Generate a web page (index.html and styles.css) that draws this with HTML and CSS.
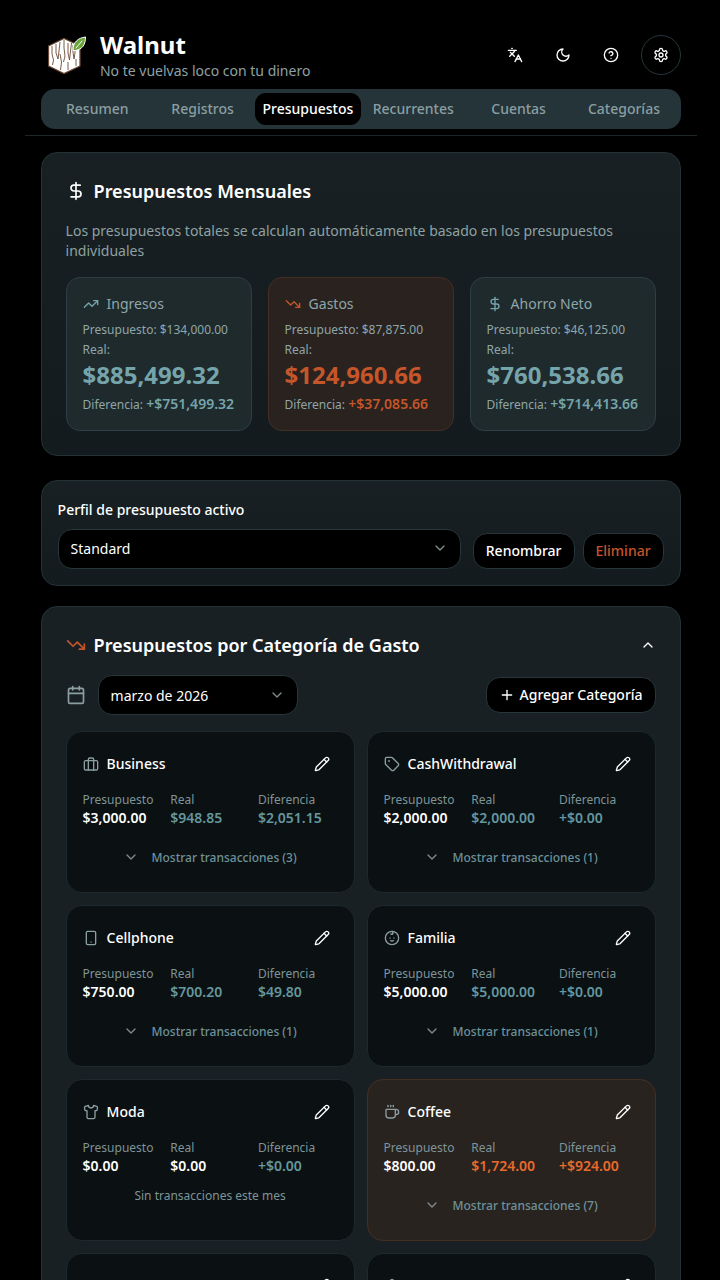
FILE: index.html
```html
<!DOCTYPE html>
<html lang="es">
<head>
    <meta charset="UTF-8">
    <meta name="viewport" content="width=device-width, initial-scale=1.0">
    <title>Walnut</title>
    <link rel="stylesheet" href="styles.css">
</head>
<body>
    <svg class="icon-defs" width="0" height="0" aria-hidden="true">
        <symbol id="i-down" viewBox="0 0 24 24"><path d="m6 9 6 6 6-6"/></symbol>
        <symbol id="i-pencil" viewBox="0 0 24 24"><path d="M21.2 6.8a2.8 2.8 0 0 0-4-4L3.8 16.2a2 2 0 0 0-.5.8l-1.3 4.4a.5.5 0 0 0 .6.6l4.4-1.3a2 2 0 0 0 .8-.5z"/><path d="m15 5 4 4"/></symbol>
        <symbol id="i-dollar" viewBox="0 0 24 24"><path d="M12 2v20"/><path d="M17 5H9.5a3.5 3.5 0 0 0 0 7h5a3.5 3.5 0 0 1 0 7H6"/></symbol>
        <symbol id="i-up-trend" viewBox="0 0 24 24"><path d="M22 7 13.5 15.5l-5-5L2 17"/><path d="M16 7h6v6"/></symbol>
        <symbol id="i-down-trend" viewBox="0 0 24 24"><path d="M22 17 13.5 8.5l-5 5L2 7"/><path d="M16 17h6v-6"/></symbol>
    </svg>

    <div class="page">
        <header class="top">
            <div class="top-row">
                <div class="brand">
                    <svg class="logo" viewBox="0 0 38 38">
                        <path d="M16 2.500 32 10V30L16 37.500 .5 30V10z" fill="#fff" stroke="#6b4a36" stroke-width="1.300"/>
                        <path d="M4 10v8l1.500 6-1 5M8 8v9l2 6 1-8 1-9M12 18l1.500 8-1 8M16 4v8l1 8-1.500 6M20 7v10l1.500 7 1-9 1-8M20 34v-8M25 9v7l1 7 1-6v-7M28 30v-7" fill="none" stroke="#6b4a36" stroke-width=".9" stroke-linecap="butt"/>
                        <path d="M25 14C25 6 30 2 37.500 1c0 8-3 12-10 13.500z" fill="#6aa53a" stroke="#fff" stroke-width="1"/>
                        <path d="M28 12 34 5" stroke="#fff" stroke-width="1"/>
                    </svg>
                    <div class="brand-text">
                        <h1>Walnut</h1>
                        <p>No te vuelvas loco con tu dinero</p>
                    </div>
                </div>
                <div class="top-actions">
                    <button class="round-btn">
                        <svg class="ic-16" viewBox="0 0 24 24"><path d="m5 8 6 6"/><path d="m4 14 6-6 2-3"/><path d="M2 5h12"/><path d="M7 2h1"/><path d="m22 22-5-10-5 10"/><path d="M14 18h6"/></svg>
                    </button>
                    <button class="round-btn">
                        <svg class="ic-16" viewBox="0 0 24 24"><path d="M12 3a6 6 0 0 0 9 9 9 9 0 1 1-9-9Z"/></svg>
                    </button>
                    <button class="round-btn">
                        <svg class="ic-16" viewBox="0 0 24 24"><circle cx="12" cy="12" r="10"/><path d="M9.100 9a3 3 0 0 1 5.800 1c0 2-3 3-3 3"/><path d="M12 17h.01"/></svg>
                    </button>
                    <button class="round-btn bordered">
                        <svg class="ic-16" viewBox="0 0 24 24"><path d="M12.220 2h-.44a2 2 0 0 0-2 2v.18a2 2 0 0 1-1 1.730l-.43.25a2 2 0 0 1-2 0l-.15-.08a2 2 0 0 0-2.730.73l-.22.38a2 2 0 0 0 .73 2.730l.15.1a2 2 0 0 1 1 1.720v.51a2 2 0 0 1-1 1.740l-.15.09a2 2 0 0 0-.73 2.730l.22.38a2 2 0 0 0 2.730.73l.15-.08a2 2 0 0 1 2 0l.43.25a2 2 0 0 1 1 1.730V20a2 2 0 0 0 2 2h.44a2 2 0 0 0 2-2v-.18a2 2 0 0 1 1-1.730l.43-.25a2 2 0 0 1 2 0l.15.08a2 2 0 0 0 2.730-.73l.22-.39a2 2 0 0 0-.73-2.730l-.15-.08a2 2 0 0 1-1-1.740v-.5a2 2 0 0 1 1-1.740l.15-.09a2 2 0 0 0 .73-2.730l-.22-.38a2 2 0 0 0-2.730-.73l-.15.08a2 2 0 0 1-2 0l-.43-.25a2 2 0 0 1-1-1.730V4a2 2 0 0 0-2-2z"/><circle cx="12" cy="12" r="3"/></svg>
                    </button>
                </div>
            </div>
            <nav class="tabs">
                <a href="#">Resumen</a>
                <a href="#">Registros</a>
                <a href="#" class="active">Presupuestos</a>
                <a href="#">Recurrentes</a>
                <a href="#">Cuentas</a>
                <a href="#">Categorías</a>
            </nav>
        </header>

        <main>
            <section class="panel monthly">
                <h2 class="panel-title"><svg class="ic-20 white"><use href="#i-dollar"/></svg>Presupuestos Mensuales</h2>
                <p class="panel-note">Los presupuestos totales se calculan automáticamente basado en los presupuestos individuales</p>
                <div class="summary">
                    <div class="stat">
                        <div class="stat-head"><svg class="ic-16 teal"><use href="#i-up-trend"/></svg>Ingresos</div>
                        <p>Presupuesto: $134,000.00</p>
                        <p>Real:</p>
                        <div class="stat-value">$885,499.32</div>
                        <p class="stat-diff">Diferencia: <b>+$751,499.32</b></p>
                    </div>
                    <div class="stat over">
                        <div class="stat-head"><svg class="ic-16 rust"><use href="#i-down-trend"/></svg>Gastos</div>
                        <p>Presupuesto: $87,875.00</p>
                        <p>Real:</p>
                        <div class="stat-value">$124,960.66</div>
                        <p class="stat-diff">Diferencia: <b>+$37,085.66</b></p>
                    </div>
                    <div class="stat">
                        <div class="stat-head"><svg class="ic-16 teal"><use href="#i-dollar"/></svg>Ahorro Neto</div>
                        <p>Presupuesto: $46,125.00</p>
                        <p>Real:</p>
                        <div class="stat-value">$760,538.66</div>
                        <p class="stat-diff">Diferencia: <b>+$714,413.66</b></p>
                    </div>
                </div>
            </section>

            <section class="panel profile">
                <label class="profile-label">Perfil de presupuesto activo</label>
                <div class="profile-row">
                    <div class="select grow">Standard<svg class="ic-16 gray"><use href="#i-down"/></svg></div>
                    <button class="pill">Renombrar</button>
                    <button class="pill danger">Eliminar</button>
                </div>
            </section>

            <section class="panel categories">
                <div class="cat-title">
                    <h2 class="panel-title"><svg class="ic-20 rust"><use href="#i-down-trend"/></svg>Presupuestos por Categoría de Gasto</h2>
                    <svg class="ic-16 white" viewBox="0 0 24 24"><path d="m18 15-6-6-6 6"/></svg>
                </div>
                <div class="cat-tools">
                    <svg class="ic-20 slate" viewBox="0 0 24 24"><path d="M8 2v4"/><path d="M16 2v4"/><rect x="3" y="4" width="18" height="18" rx="2"/><path d="M3 10h18"/></svg>
                    <div class="select month">marzo de 2026<svg class="ic-16 gray"><use href="#i-down"/></svg></div>
                    <button class="pill add"><svg class="ic-16 white" viewBox="0 0 24 24"><path d="M5 12h14"/><path d="M12 5v14"/></svg>Agregar Categoría</button>
                </div>

                <div class="cat-grid">
                    <article class="cat-card">
                        <div class="cat-head">
                            <svg class="ic-16 slate" viewBox="0 0 24 24"><rect x="2" y="7" width="20" height="14" rx="2"/><path d="M16 21V5a2 2 0 0 0-2-2h-4a2 2 0 0 0-2 2v16"/></svg>
                            <h3>Business</h3>
                            <svg class="ic-16 white edit"><use href="#i-pencil"/></svg>
                        </div>
                        <div class="cat-nums">
                            <div><span>Presupuesto</span><b>$3,000.00</b></div>
                            <div><span>Real</span><b class="ok">$948.85</b></div>
                            <div><span>Diferencia</span><b class="ok">$2,051.15</b></div>
                        </div>
                        <div class="cat-more"><svg class="ic-16 gray"><use href="#i-down"/></svg>Mostrar transacciones (3)</div>
                    </article>
                    <article class="cat-card">
                        <div class="cat-head">
                            <svg class="ic-16 slate" viewBox="0 0 24 24"><path d="M12.600 2.600A2 2 0 0 0 11.200 2H4a2 2 0 0 0-2 2v7.200a2 2 0 0 0 .6 1.400l8.700 8.700a2.400 2.400 0 0 0 3.400 0l6.600-6.600a2.400 2.400 0 0 0 0-3.400z"/><circle cx="7.500" cy="7.500" r=".5"/></svg>
                            <h3>CashWithdrawal</h3>
                            <svg class="ic-16 white edit"><use href="#i-pencil"/></svg>
                        </div>
                        <div class="cat-nums">
                            <div><span>Presupuesto</span><b>$2,000.00</b></div>
                            <div><span>Real</span><b class="ok">$2,000.00</b></div>
                            <div><span>Diferencia</span><b class="ok">+$0.00</b></div>
                        </div>
                        <div class="cat-more"><svg class="ic-16 gray"><use href="#i-down"/></svg>Mostrar transacciones (1)</div>
                    </article>
                    <article class="cat-card">
                        <div class="cat-head">
                            <svg class="ic-16 slate" viewBox="0 0 24 24"><rect x="5" y="2" width="14" height="20" rx="2"/><path d="M12 18h.01"/></svg>
                            <h3>Cellphone</h3>
                            <svg class="ic-16 white edit"><use href="#i-pencil"/></svg>
                        </div>
                        <div class="cat-nums">
                            <div><span>Presupuesto</span><b>$750.00</b></div>
                            <div><span>Real</span><b class="ok">$700.20</b></div>
                            <div><span>Diferencia</span><b class="ok">$49.80</b></div>
                        </div>
                        <div class="cat-more"><svg class="ic-16 gray"><use href="#i-down"/></svg>Mostrar transacciones (1)</div>
                    </article>
                    <article class="cat-card">
                        <div class="cat-head">
                            <svg class="ic-16 slate" viewBox="0 0 24 24"><circle cx="12" cy="12" r="10"/><path d="M9 12h.01"/><path d="M15 12h.01"/><path d="M10 16c.5.300 1.200.5 2 .5s1.500-.2 2-.5"/><path d="M12 2c1.500 1 2 2.500 1 4-.7 1-2.500.8-2.500-.5"/></svg>
                            <h3>Familia</h3>
                            <svg class="ic-16 white edit"><use href="#i-pencil"/></svg>
                        </div>
                        <div class="cat-nums">
                            <div><span>Presupuesto</span><b>$5,000.00</b></div>
                            <div><span>Real</span><b class="ok">$5,000.00</b></div>
                            <div><span>Diferencia</span><b class="ok">+$0.00</b></div>
                        </div>
                        <div class="cat-more"><svg class="ic-16 gray"><use href="#i-down"/></svg>Mostrar transacciones (1)</div>
                    </article>
                    <article class="cat-card">
                        <div class="cat-head">
                            <svg class="ic-16 slate" viewBox="0 0 24 24"><path d="M20.380 3.460 16 2a4 4 0 0 1-8 0L3.620 3.460a2 2 0 0 0-1.340 2.230l.58 3.470a1 1 0 0 0 .99.84H6v10c0 1.100.9 2 2 2h8a2 2 0 0 0 2-2V10h2.150a1 1 0 0 0 .99-.84l.58-3.470a2 2 0 0 0-1.340-2.230z"/></svg>
                            <h3>Moda</h3>
                            <svg class="ic-16 white edit"><use href="#i-pencil"/></svg>
                        </div>
                        <div class="cat-nums">
                            <div><span>Presupuesto</span><b>$0.00</b></div>
                            <div><span>Real</span><b>$0.00</b></div>
                            <div><span>Diferencia</span><b class="ok">+$0.00</b></div>
                        </div>
                        <div class="cat-empty">Sin transacciones este mes</div>
                    </article>
                    <article class="cat-card over">
                        <div class="cat-head">
                            <svg class="ic-16 slate" viewBox="0 0 24 24"><path d="M10 2v2"/><path d="M14 2v2"/><path d="M16 8a1 1 0 0 1 1 1v8a4 4 0 0 1-4 4H7a4 4 0 0 1-4-4V9a1 1 0 0 1 1-1h14a4 4 0 1 1 0 8h-1"/><path d="M6 2v2"/></svg>
                            <h3>Coffee</h3>
                            <svg class="ic-16 white edit"><use href="#i-pencil"/></svg>
                        </div>
                        <div class="cat-nums">
                            <div><span>Presupuesto</span><b>$800.00</b></div>
                            <div><span>Real</span><b class="bad">$1,724.00</b></div>
                            <div><span>Diferencia</span><b class="bad">+$924.00</b></div>
                        </div>
                        <div class="cat-more"><svg class="ic-16 gray"><use href="#i-down"/></svg>Mostrar transacciones (7)</div>
                    </article>
                    <article class="cat-card">
                        <div class="cat-head">
                            <svg class="ic-16 slate" viewBox="0 0 24 24"><rect x="2" y="6" width="20" height="14" rx="2"/><path d="M2 11h20"/></svg>
                            <h3></h3>
                            <svg class="ic-16 white edit"><use href="#i-pencil"/></svg>
                        </div>
                    </article>
                    <article class="cat-card">
                        <div class="cat-head">
                            <svg class="ic-16 slate" viewBox="0 0 24 24"><path d="M12 2 4 7v10l8 5 8-5V7z"/></svg>
                            <h3></h3>
                            <svg class="ic-16 white edit"><use href="#i-pencil"/></svg>
                        </div>
                    </article>
                </div>
            </section>
        </main>
    </div>
</body>
</html>
```

FILE: styles.css
```css
html, body {
    margin: 0;
    padding: 0;
    height: 1280px;
    overflow: hidden;
    background-color: #000;
}

body {
    font-family: "Noto Sans", sans-serif;
    color: #fff;
    font-size: 14px;
}

h1, h2, h3, p {
    margin: 0;
}

button {
    font-family: inherit;
    cursor: pointer;
}

a {
    text-decoration: none;
}

svg {
    fill: none;
    stroke: currentColor;
    stroke-width: 2;
    stroke-linecap: round;
    stroke-linejoin: round;
    flex: none;
}

.icon-defs {
    position: absolute;
}

.ic-16 {
    width: 16px;
    height: 16px;
}

.ic-20 {
    width: 20px;
    height: 20px;
}

.white { color: #fff; }
.teal { color: #75a5ab; }
.rust { color: #c4562a; }
.gray { color: #7f8a8c; }
.slate { color: #8b9ea1; }

.page {
    padding: 0 23.4px 0 24.6px;
}

/* Header */
.top {
    padding: 35px 16px 0;
    height: 100px;
    border-bottom: 1px solid #1c2528;
}

.top-row {
    display: flex;
    justify-content: space-between;
    align-items: center;
    height: 40px;
}

.brand {
    display: flex;
    align-items: center;
    gap: 14px;
    padding-left: 7.4px;
}

.logo {
    width: 38px;
    height: 38px;
    stroke: none;
    margin-top: -1px;
}

.brand-text {
    margin-top: 4px;
}

.brand h1 {
    font-size: 24px;
    font-weight: 700;
    line-height: 24px;
}

.brand p {
    color: #8fa1a3;
    font-size: 14px;
    line-height: 20px;
    margin-top: 4px;
}

.top-actions {
    display: flex;
    gap: 8px;
}

.round-btn {
    width: 40px;
    height: 40px;
    border-radius: 50%;
    border: 1px solid transparent;
    background: transparent;
    color: #fff;
    padding: 0;
    display: flex;
    align-items: center;
    justify-content: center;
}

.round-btn.bordered {
    margin-left: 2px;
    border-color: #26363b;
}

.tabs {
    display: grid;
    grid-template-columns: repeat(6, 1fr);
    height: 40px;
    margin-top: 14px;
    padding: 4px;
    box-sizing: border-box;
    background-color: #243439;
    border-radius: 14px;
}

.tabs a {
    display: flex;
    align-items: center;
    justify-content: center;
    padding-bottom: 2px;
    color: #8b9ea1;
    font-size: 14px;
    font-weight: 500;
    border-radius: 11px;
}

.tabs a.active {
    background-color: #000;
    color: #fff;
}

/* Panels */
main {
    padding: 16px 16px 0;
    display: flex;
    flex-direction: column;
    gap: 24px;
}

.panel {
    box-sizing: border-box;
    background: linear-gradient(180deg, #182023, #141b1e);
    border: 1px solid #243236;
    border-radius: 16px;
}

.monthly {
    height: 304px;
    padding: 24px;
}

.panel-title {
    display: flex;
    align-items: center;
    gap: 8px;
    font-size: 18px;
    font-weight: 600;
    line-height: 28px;
}

.panel-note {
    color: #8fa1a3;
    font-size: 14px;
    line-height: 20px;
    margin-top: 16px;
}

.summary {
    display: grid;
    grid-template-columns: repeat(3, 1fr);
    gap: 16px;
    margin-top: 16px;
}

.stat {
    box-sizing: border-box;
    height: 154px;
    padding: 16px;
    background-color: #1f2a2d;
    border: 1px solid #2d3f44;
    border-radius: 14px;
    color: #8fa6a9;
    font-size: 12px;
    line-height: 20px;
}

.stat.over {
    background-color: #29221f;
    border-color: #472e23;
}

.stat-head {
    display: flex;
    align-items: center;
    gap: 8px;
    font-size: 14px;
    line-height: 20px;
    margin-bottom: 6px;
}

.stat-value {
    color: #75a5ab;
    font-size: 24px;
    font-weight: 700;
    line-height: 32px;
    margin-top: -1px;
}

.stat-diff {
    margin-top: 3px;
}

.stat-diff b {
    color: #75a5ab;
    font-size: 14px;
    font-weight: 600;
}

.stat.over .stat-value,
.stat.over .stat-diff b {
    color: #c4562a;
}

/* Profile */
.profile {
    height: 106px;
    padding: 16px;
}

.profile-label {
    display: block;
    font-size: 14px;
    font-weight: 500;
    line-height: 26px;
}

.profile-row {
    display: flex;
    align-items: flex-end;
    gap: 8px;
    margin-top: 6px;
}

.select {
    box-sizing: border-box;
    height: 40px;
    padding: 0 12px;
    display: flex;
    align-items: center;
    justify-content: space-between;
    background-color: #000;
    border: 1px solid #26363b;
    border-radius: 14px;
    font-size: 14px;
}

.grow {
    flex: 1;
    margin-right: 4px;
    padding-bottom: 2px;
}

.pill {
    box-sizing: border-box;
    height: 36px;
    padding: 0 12px 2px;
    display: flex;
    align-items: center;
    gap: 8px;
    background-color: #000;
    color: #fff;
    border: 1px solid #26363b;
    border-radius: 14px;
    font-size: 14px;
    font-weight: 500;
}

.pill.danger {
    color: #c4562a;
}

/* Categories */
.categories {
    margin-top: -4px;
    padding: 24px;
    height: 760px;
    background: #182024;
}

.cat-title {
    display: flex;
    align-items: center;
    justify-content: space-between;
    height: 28px;
}

.cat-tools {
    display: flex;
    align-items: center;
    gap: 12px;
    margin-top: 16px;
}

.month {
    width: 200px;
}

.add {
    margin-left: auto;
    gap: 5px;
    padding-bottom: 1px;
}

.cat-grid {
    display: grid;
    grid-template-columns: repeat(2, 1fr);
    grid-auto-rows: 162px;
    gap: 12px;
    margin-top: 16px;
}

.cat-card {
    box-sizing: border-box;
    padding: 16px;
    background-color: #0b1012;
    border: 1px solid #1d292d;
    border-radius: 16px;
}

.cat-card.over {
    background-color: #29231f;
    border-color: #472e23;
}

.cat-head {
    display: flex;
    align-items: center;
    gap: 8px;
    height: 32px;
}

.cat-head h3 {
    flex: 1;
    font-size: 14px;
    font-weight: 500;
    line-height: 20px;
}

.edit {
    margin-right: 8px;
}

.cat-nums {
    display: grid;
    grid-template-columns: repeat(3, 1fr);
    gap: 8px;
    margin-top: 12px;
    font-size: 12px;
}

.cat-nums span {
    display: block;
    color: #7e9498;
    line-height: 16px;
}

.cat-nums b {
    display: block;
    color: #fff;
    font-size: 14px;
    font-weight: 600;
    line-height: 20px;
}

.cat-nums b.ok {
    color: #64979e;
}

.cat-nums b.bad {
    color: #ea6a2a;
}

.cat-more {
    display: flex;
    align-items: center;
    justify-content: center;
    gap: 12px;
    height: 32px;
    margin-top: 13px;
    color: #6d929a;
    font-size: 12px;
    font-weight: 500;
}

.cat-empty {
    text-align: center;
    color: #7e9498;
    font-size: 12px;
    line-height: 16px;
    margin-top: 12px;
}
```
